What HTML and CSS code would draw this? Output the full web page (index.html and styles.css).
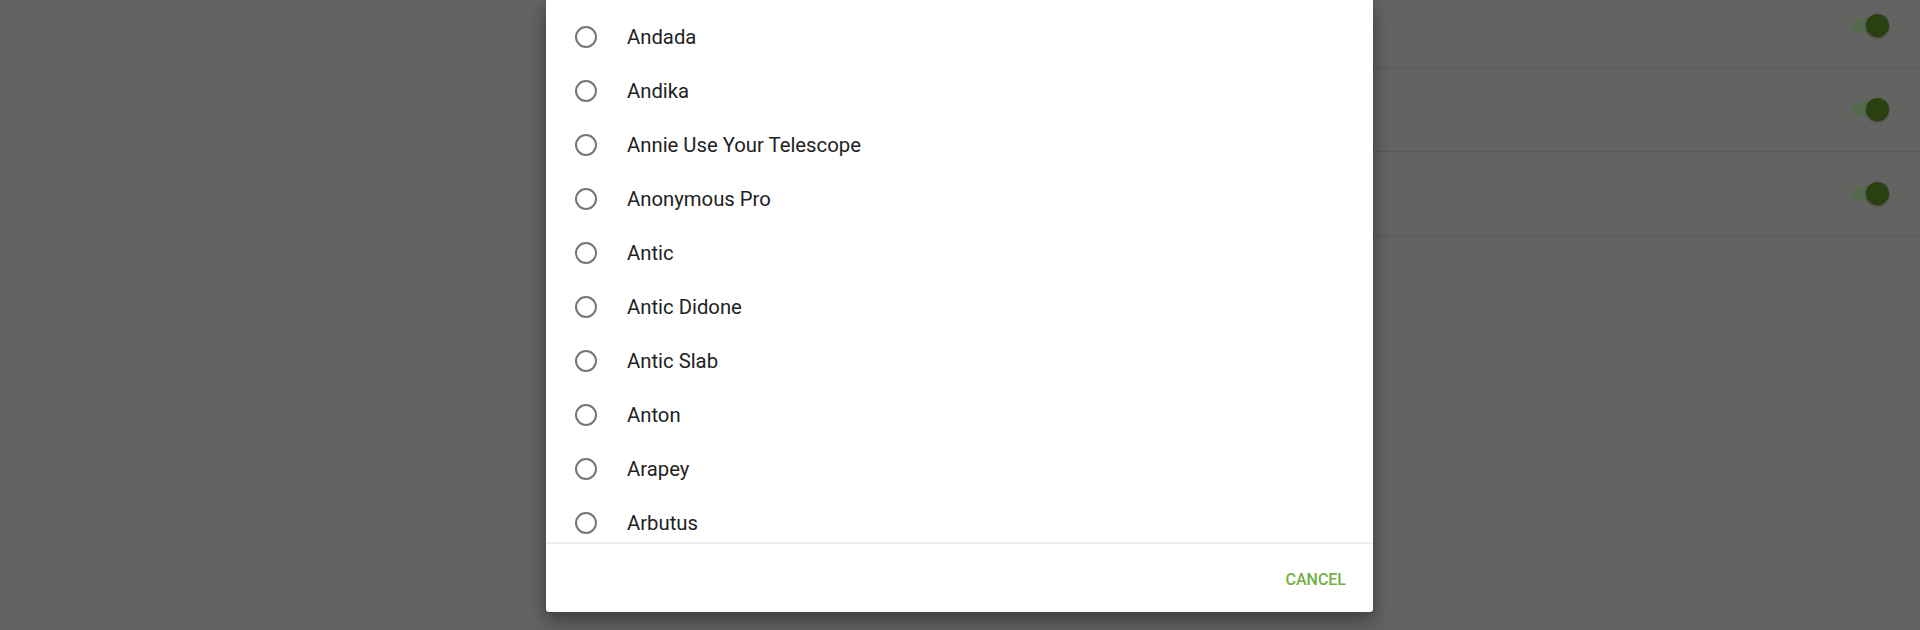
FILE: index.html
```html
<!DOCTYPE html>
<html lang="en">
<head>
<meta charset="utf-8">
<title>Font picker</title>
<link rel="stylesheet" href="styles.css">
</head>
<body>
<div class="page">
  <div class="left-pane"></div>
  <div class="settings">
    <div class="setting-row"><div class="toggle"><span class="track"></span><span class="thumb"></span></div></div>
    <div class="setting-row"><div class="toggle"><span class="track"></span><span class="thumb"></span></div></div>
    <div class="setting-row"><div class="toggle"><span class="track"></span><span class="thumb"></span></div></div>
  </div>
</div>

<div class="dialog">
  <div class="options">
    <div class="option"><span class="radio"></span><span class="label">Andada</span></div>
    <div class="option"><span class="radio"></span><span class="label">Andika</span></div>
    <div class="option"><span class="radio"></span><span class="label">Annie Use Your Telescope</span></div>
    <div class="option"><span class="radio"></span><span class="label">Anonymous Pro</span></div>
    <div class="option"><span class="radio"></span><span class="label">Antic</span></div>
    <div class="option"><span class="radio"></span><span class="label">Antic Didone</span></div>
    <div class="option"><span class="radio"></span><span class="label">Antic Slab</span></div>
    <div class="option"><span class="radio"></span><span class="label">Anton</span></div>
    <div class="option"><span class="radio"></span><span class="label">Arapey</span></div>
    <div class="option"><span class="radio"></span><span class="label">Arbutus</span></div>
  </div>
  <div class="actions">
    <span class="btn-cancel">CANCEL</span>
  </div>
</div>
</body>
</html>
```

FILE: styles.css
```css
html, body {
  margin: 0;
  padding: 0;
}
body {
  width: 1920px;
  height: 630px;
  overflow: hidden;
  background: #636461;
  font-family: Roboto, "Noto Sans", "Liberation Sans", sans-serif;
  position: relative;
}
.page {
  display: grid;
  grid-template-columns: 1100px 1fr;
  height: 630px;
}
.settings {
  display: flex;
  flex-direction: column;
  margin-top: -16px;
}
.setting-row {
  height: 83px;
  border-bottom: 1px solid #595a57;
  display: flex;
  align-items: center;
  justify-content: flex-end;
  padding-right: 31px;
}
.toggle {
  display: flex;
  align-items: center;
  margin-top: -1px;
}
.track {
  display: block;
  width: 34px;
  height: 15px;
  border-radius: 8px;
  background: #56694f;
  flex: none;
}
.thumb {
  display: block;
  width: 23px;
  height: 23px;
  border-radius: 50%;
  background: #2a4010;
  margin-left: -20px;
  flex: none;
  box-shadow: 0 1px 2px rgba(0, 0, 0, 0.35);
}

.dialog {
  position: absolute;
  left: 546px;
  top: 0;
  width: 827px;
  height: 612px;
  background: #ffffff;
  border-radius: 0 0 3px 3px;
  box-shadow: 0 12px 20px rgba(0, 0, 0, 0.22), 0 4px 14px rgba(0, 0, 0, 0.22);
  display: flex;
  flex-direction: column;
}
.options {
  height: 542px;
  overflow: hidden;
  padding-top: 10px;
  box-sizing: border-box;
}
.option {
  height: 54px;
  display: flex;
  align-items: center;
  padding-left: 29px;
}
.radio {
  display: block;
  width: 22px;
  height: 22px;
  box-sizing: border-box;
  border: 2px solid #767676;
  border-radius: 50%;
  flex: none;
}
.label {
  margin-left: 30px;
  font-size: 20.3px;
  color: #222222;
}
.actions {
  border-top: 2px solid #eeeeee;
  flex: 1;
  display: flex;
  align-items: center;
  justify-content: flex-end;
  padding-right: 27px;
}
.btn-cancel {
  font-size: 16px;
  font-weight: 500;
  color: #72b043;
  margin-top: 2px;
}
```
